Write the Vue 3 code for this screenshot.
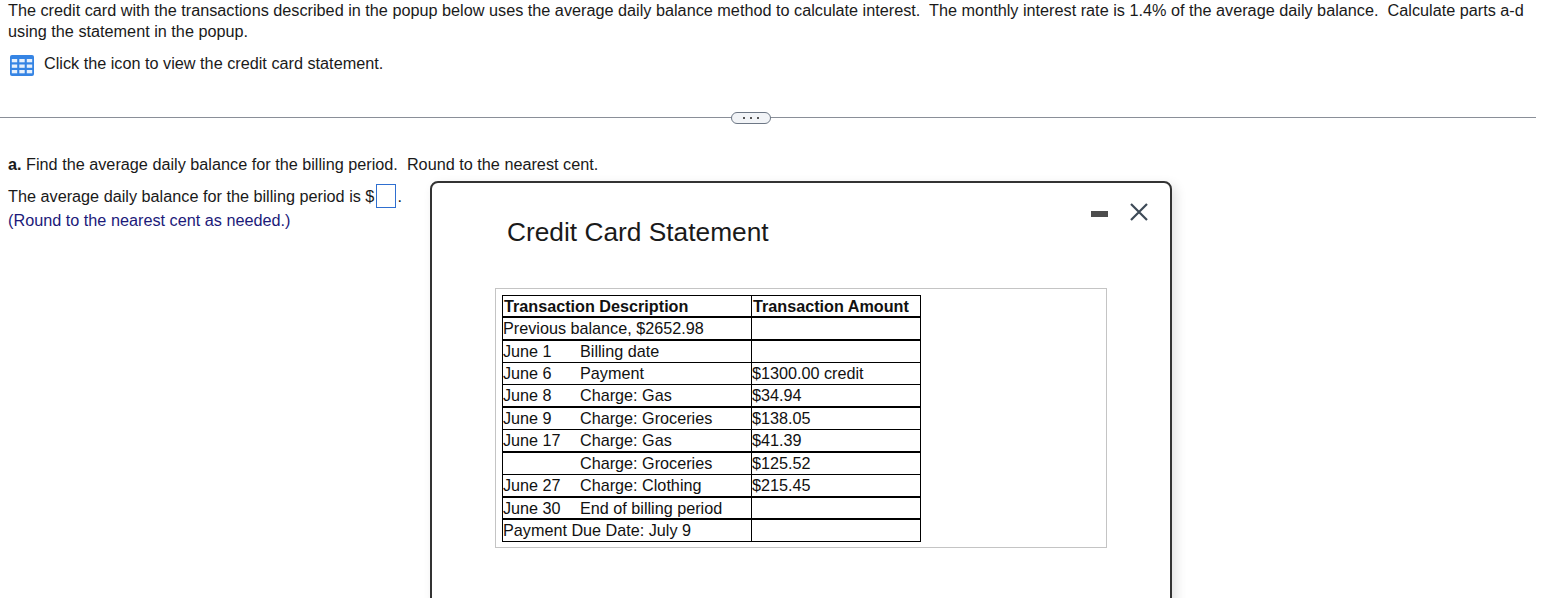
<template>
  <div class="page">
    <div class="question">
      <p class="intro">The credit card with the transactions described in the popup below uses the average daily balance method to calculate interest.&nbsp; The monthly interest rate is 1.4% of the average daily balance.&nbsp; Calculate parts a-d using the statement in the popup.</p>
      <div class="icon-row">
        <svg class="table-icon" width="24" height="21" viewBox="0 0 24 21">
          <rect x="0" y="0" width="24" height="21" rx="2" fill="#3584e4" />
          <g fill="#e6f0fc">
            <rect v-for="cell in iconCells" :key="cell.id" :x="cell.x" :y="cell.y" width="5.4" height="3.3" />
          </g>
        </svg>
        <span>Click the icon to view the credit card statement.</span>
      </div>
    </div>

    <div class="divider">
      <button class="more"><i></i><i></i><i></i></button>
    </div>

    <div class="part">
      <p class="part-title"><b>a.</b> Find the average daily balance for the billing period.&nbsp; Round to the nearest cent.</p>
      <p class="answer">The average daily balance for the billing period is $<span class="answer-box"></span>.</p>
      <p class="hint">(Round to the nearest cent as needed.)</p>
    </div>

    <div class="popup">
      <div class="popup-controls">
        <span class="minimize"></span>
        <svg width="20" height="20" viewBox="0 0 20 20">
          <path d="M2 2 L18 18 M18 2 L2 18" stroke="#3d4a57" stroke-width="2.2" fill="none" />
        </svg>
      </div>
      <h2 class="popup-title">Credit Card Statement</h2>
      <div class="statement-frame">
        <table class="statement">
          <tbody>
            <tr class="thick">
              <th>Transaction Description</th>
              <th>Transaction Amount</th>
            </tr>
            <tr v-for="row in rows" :key="row.id" :class="{ thick: row.thick, tall: row.tall }">
              <td>
                <template v-if="row.text">{{ row.text }}</template>
                <template v-else>
                  <span class="date">{{ row.date }}</span>{{ row.desc }}
                </template>
              </td>
              <td>{{ row.amount }}</td>
            </tr>
          </tbody>
        </table>
      </div>
    </div>
  </div>
</template>

<script setup>
const iconCells = []
for (let r = 0; r < 3; r++) {
  for (let c = 0; c < 3; c++) {
    iconCells.push({ id: `${r}-${c}`, x: 1.8 + c * 7.5, y: 4 + r * 5.5 })
  }
}

// the scanned table has uneven rules, some rows are a pixel taller
const rows = [
  { id: 1, text: 'Previous balance, $2652.98', amount: '', thick: true, tall: true },
  { id: 2, date: 'June 1', desc: 'Billing date', amount: '' },
  { id: 3, date: 'June 6', desc: 'Payment', amount: '$1300.00 credit' },
  { id: 4, date: 'June 8', desc: 'Charge: Gas', amount: '$34.94', thick: true, tall: true },
  { id: 5, date: 'June 9', desc: 'Charge: Groceries', amount: '$138.05' },
  { id: 6, date: 'June 17', desc: 'Charge: Gas', amount: '$41.39', thick: true, tall: true },
  { id: 7, date: '', desc: 'Charge: Groceries', amount: '$125.52' },
  { id: 8, date: 'June 27', desc: 'Charge: Clothing', amount: '$215.45', thick: true, tall: true },
  { id: 9, date: 'June 30', desc: 'End of billing period', amount: '', thick: true },
  { id: 10, text: 'Payment Due Date: July 9', amount: '' }
]
</script>

<style>
html, body {
  margin: 0;
  background: #fff;
  overflow: hidden;
}
</style>

<style scoped>
.page {
  position: relative;
  height: 598px;
  overflow: hidden;
  font-family: "Liberation Sans", Arial, sans-serif;
  font-size: 16.24px;
  color: #1a1a1a;
}
p {
  margin: 0;
}
.question {
  padding: 0 8px;
  height: 117px;
}
.intro {
  line-height: 21px;
}
.icon-row {
  display: flex;
  align-items: flex-start;
  gap: 10px;
  margin-top: 12px;
  margin-left: 2px;
}
.table-icon {
  flex: none;
  margin-top: 1px;
}
.divider {
  height: 1px;
  background: #8a8f98;
  margin-right: 6px;
  padding-left: 731px;
  display: flex;
  align-items: center;
}
.more {
  width: 40px;
  height: 12px;
  padding: 0;
  border: 1px solid #6d7785;
  border-radius: 6px;
  background: #f2f4f7;
  display: flex;
  justify-content: center;
  align-items: center;
  gap: 5px;
  box-sizing: border-box;
}
.more i {
  width: 2px;
  height: 2px;
  background: #555;
}
.part {
  padding: 36px 8px 0;
}
.part-title {
  line-height: 20px;
}
.answer {
  margin-top: 10px;
  line-height: 24px;
  display: flex;
  align-items: center;
}
.answer-box {
  width: 18px;
  height: 22px;
  margin: -1px 1px 0 2px;
  border: 1px solid #2f6fd0;
}
.hint {
  color: #1c1a7a;
  line-height: 24px;
}
.popup {
  position: absolute;
  left: 430px;
  top: 181px;
  width: 742px;
  height: 500px;
  box-sizing: border-box;
  border: 2px solid #333;
  border-radius: 8px;
  background: #fff;
  box-shadow: 4px 4px 12px rgba(0, 0, 0, 0.12);
  padding-left: 63px;
}
.popup-controls {
  position: absolute;
  right: 21px;
  top: 19px;
  display: flex;
  align-items: center;
  gap: 21px;
}
.minimize {
  width: 17px;
  height: 6px;
  background: #4d4d4d;
  margin-top: 4px;
}
.popup-title {
  margin: 0;
  padding: 33px 0 0 12px;
  font-size: 26.3px;
  font-weight: 400;
  line-height: 32px;
}
.statement-frame {
  width: 612px;
  height: 260px;
  margin-top: 40px;
  box-sizing: border-box;
  border: 1px solid #c4c4c4;
  padding: 6px;
}
.statement {
  border-collapse: separate;
  border-spacing: 0;
  width: 419px;
  table-layout: fixed;
  font-size: 16.2px;
  line-height: 18px;
  border-top: 1px solid #000;
  border-left: 1px solid #000;
}
.statement th,
.statement td {
  border-right: 1px solid #000;
  border-bottom: 1px solid #000;
  padding: 0;
  height: 22px;
  box-sizing: border-box;
  text-align: left;
  white-space: nowrap;
  color: #111;
}
.statement td {
  padding-bottom: 1px;
}
.statement .thick td {
  padding-bottom: 0;
}
.statement .tall td {
  height: 23px;
  padding-bottom: 1px;
}
.statement .thick th,
.statement .thick td {
  border-bottom-width: 2px;
}
.statement th:first-child,
.statement td:first-child {
  width: 249px;
}
.statement th {
  font-weight: 700;
  padding-left: 1px;
}
.date {
  display: inline-block;
  width: 77px;
}
</style>
